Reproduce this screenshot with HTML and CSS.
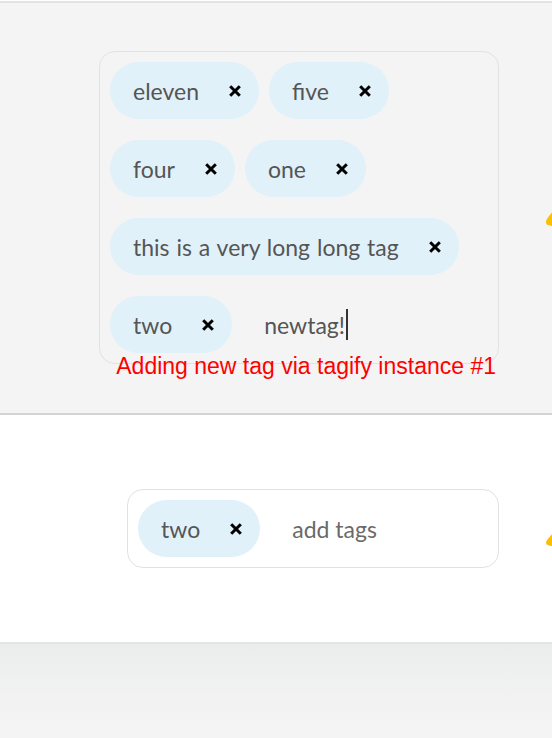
FILE: index.html
```html
<!DOCTYPE html>
<html>
<head>
<meta charset="utf-8">
<link rel="stylesheet" href="styles.css">
</head>
<body>
  <section class="sec sec-gray">
    <div class="row row-1">
      <div class="tags tags-wide">
        <span class="tag"><span class="tag-text">eleven</span><svg class="x" viewBox="0 0 12 12"><path d="M1.2 1.2L10.8 10.8M10.8 1.2L1.2 10.8"/></svg></span>
        <span class="tag"><span class="tag-text">five</span><svg class="x" viewBox="0 0 12 12"><path d="M1.2 1.2L10.8 10.8M10.8 1.2L1.2 10.8"/></svg></span>
        <span class="tag"><span class="tag-text">four</span><svg class="x" viewBox="0 0 12 12"><path d="M1.2 1.2L10.8 10.8M10.8 1.2L1.2 10.8"/></svg></span>
        <span class="tag"><span class="tag-text">one</span><svg class="x" viewBox="0 0 12 12"><path d="M1.2 1.2L10.8 10.8M10.8 1.2L1.2 10.8"/></svg></span>
        <span class="tag"><span class="tag-text">this is a very long long tag</span><svg class="x" viewBox="0 0 12 12"><path d="M1.2 1.2L10.8 10.8M10.8 1.2L1.2 10.8"/></svg></span>
        <span class="tag"><span class="tag-text">two</span><svg class="x" viewBox="0 0 12 12"><path d="M1.2 1.2L10.8 10.8M10.8 1.2L1.2 10.8"/></svg></span>
        <span class="input">newtag!<span class="caret"></span></span>
        <div class="note">Adding new tag via tagify instance #1</div>
      </div>
      <svg class="blob" viewBox="0 0 20 44"><path d="M7 25 C5 28 0 33 0 36 C0 39 3 40 7 40 L20 40 L20 20 Z"/></svg>
    </div>
  </section>
  <section class="sec sec-white">
    <div class="row row-2">
      <div class="tags tags-narrow">
        <span class="tag"><span class="tag-text">two</span><svg class="x" viewBox="0 0 12 12"><path d="M1.2 1.2L10.8 10.8M10.8 1.2L1.2 10.8"/></svg></span>
        <span class="input placeholder">add tags</span>
      </div>
      <svg class="blob" viewBox="0 0 20 44"><path d="M7 26 C5 29 0 33 0 36 C0 38 3 39 7 39 L20 39 L20 20 Z"/></svg>
    </div>
  </section>
  <footer class="foot"></footer>
</body>
</html>
```

FILE: styles.css
```css
html, body {
  margin: 0;
  padding: 0;
  background: #ffffff;
  overflow: hidden;
}
body {
  font-family: Lato, "Noto Sans", sans-serif;
}
.sec {
  overflow: hidden;
}
.sec-gray {
  margin-top: 1px;
  border-top: 2px solid #e3e3e3;
  border-bottom: 2px solid #d4d4d4;
  background: #f4f4f4;
  padding: 48px 0 49px;
}
.sec-white {
  background: #ffffff;
  padding: 74px 0;
}
.row {
  display: flex;
  align-items: center;
  gap: 47px;
}
.row-1 { padding-left: 99px; }
.row-2 { padding-left: 127px; }
.tags {
  position: relative;
  box-sizing: border-box;
  display: flex;
  flex-wrap: wrap;
  align-items: center;
  gap: 21px 10px;
  padding: 10px;
  border: 1px solid #e2e2e2;
  border-radius: 16px;
  flex-shrink: 0;
}
.tags-wide { width: 400px; }
.tags-narrow { width: 372px; }
.tag {
  display: inline-flex;
  align-items: center;
  height: 57px;
  padding: 0 18px 0 23px;
  border-radius: 29px;
  background: #e1f1f9;
  color: #555555;
  font-size: 23px;
  word-spacing: 1px;
}
.x {
  width: 12px;
  height: 12px;
  margin-left: 30px;
  flex-shrink: 0;
}
.x path {
  stroke: #000000;
  stroke-width: 3;
  fill: none;
}
.input {
  display: inline-flex;
  align-items: center;
  height: 57px;
  padding-left: 22px;
  color: #555555;
  font-size: 23px;
}
.placeholder {
  color: #6a6a6a;
}
.caret {
  display: inline-block;
  width: 2px;
  height: 31px;
  margin-left: 1px;
  background: #333333;
}
.note {
  position: absolute;
  right: 2px;
  top: calc(100% - 10px);
  font-family: "Liberation Sans", Arial, sans-serif;
  font-size: 23px;
  line-height: 26px;
  color: #ff0000;
  white-space: nowrap;
}
.blob {
  width: 20px;
  height: 44px;
  flex-shrink: 0;
}
.blob path {
  fill: #f8c000;
}
.foot {
  border-top: 2px solid #e4e4e4;
  height: 120px;
  background: linear-gradient(#ebedec 0, #f4f4f4 80px);
}
```
